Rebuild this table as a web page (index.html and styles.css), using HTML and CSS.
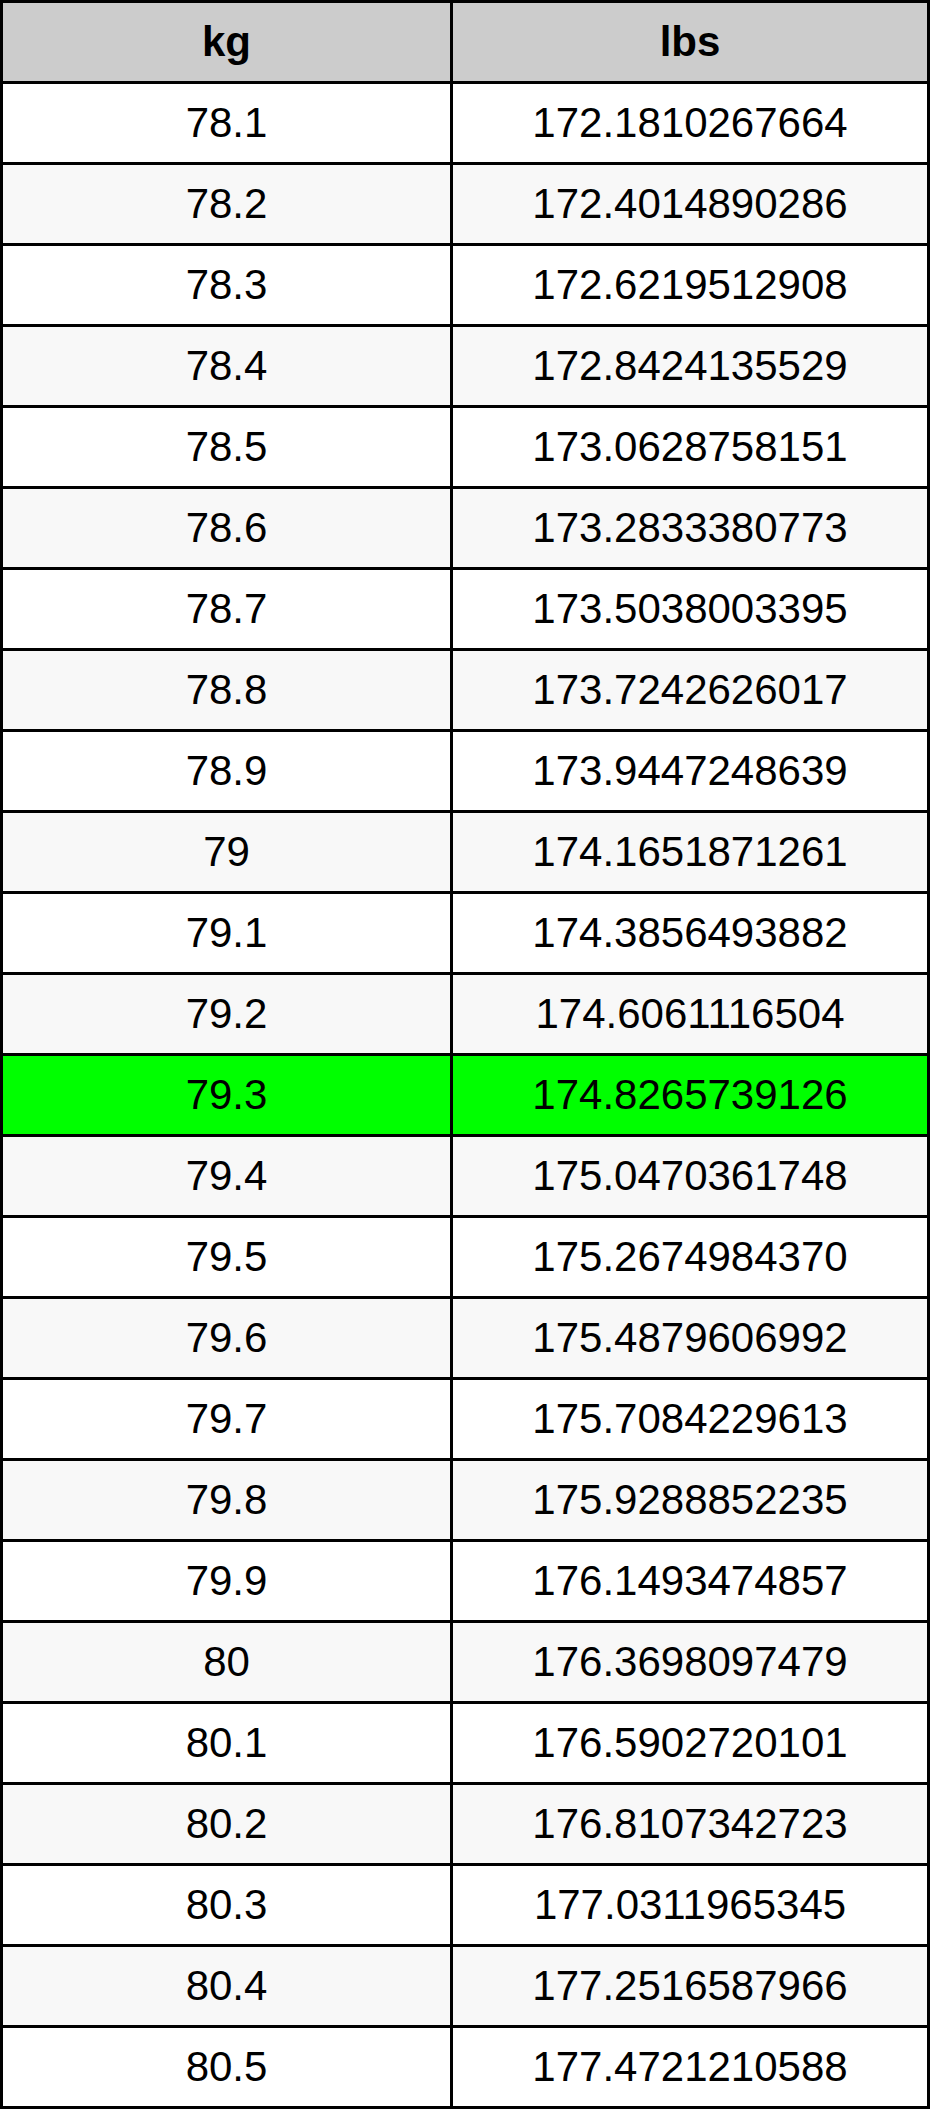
FILE: index.html
```html
<!DOCTYPE html>
<html>
<head>
<meta charset="utf-8">
<link rel="stylesheet" href="styles.css">
</head>
<body>
<table class="conv">
<thead>
<tr><th class="c1">kg</th><th class="c2">lbs</th></tr>
</thead>
<tbody>
<tr><td>78.1</td><td>172.1810267664</td></tr>
<tr><td>78.2</td><td>172.4014890286</td></tr>
<tr><td>78.3</td><td>172.6219512908</td></tr>
<tr><td>78.4</td><td>172.8424135529</td></tr>
<tr><td>78.5</td><td>173.0628758151</td></tr>
<tr><td>78.6</td><td>173.2833380773</td></tr>
<tr><td>78.7</td><td>173.5038003395</td></tr>
<tr><td>78.8</td><td>173.7242626017</td></tr>
<tr><td>78.9</td><td>173.9447248639</td></tr>
<tr><td>79</td><td>174.1651871261</td></tr>
<tr><td>79.1</td><td>174.3856493882</td></tr>
<tr><td>79.2</td><td>174.6061116504</td></tr>
<tr class="hl"><td>79.3</td><td>174.8265739126</td></tr>
<tr><td>79.4</td><td>175.0470361748</td></tr>
<tr><td>79.5</td><td>175.2674984370</td></tr>
<tr><td>79.6</td><td>175.4879606992</td></tr>
<tr><td>79.7</td><td>175.7084229613</td></tr>
<tr><td>79.8</td><td>175.9288852235</td></tr>
<tr><td>79.9</td><td>176.1493474857</td></tr>
<tr><td>80</td><td>176.3698097479</td></tr>
<tr><td>80.1</td><td>176.5902720101</td></tr>
<tr><td>80.2</td><td>176.8107342723</td></tr>
<tr><td>80.3</td><td>177.0311965345</td></tr>
<tr><td>80.4</td><td>177.2516587966</td></tr>
<tr><td>80.5</td><td>177.4721210588</td></tr>
</tbody>
</table>
</body>
</html>
```
FILE: styles.css
```css
html, body {
  margin: 0;
  padding: 0;
  background: #ffffff;
}
.conv {
  border-collapse: collapse;
  width: 930px;
  table-layout: fixed;
  font-family: "Liberation Sans", Arial, sans-serif;
  font-size: 42px;
  color: #000000;
}
.conv th, .conv td {
  border: 3px solid #000000;
  padding: 0;
  height: 78px;
  line-height: 78px;
  text-align: center;
  vertical-align: middle;
}
.conv th {
  background: #cccccc;
  font-weight: bold;
}
.conv .c1 {
  width: 447px;
}
.conv tbody tr:nth-child(even) td {
  background: #f8f8f8;
}
.conv tbody tr.hl td {
  background: #00ff00;
}
```
